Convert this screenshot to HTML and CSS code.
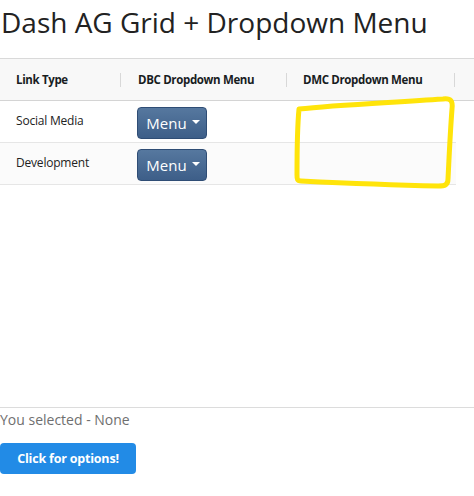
FILE: index.html
```html
<!DOCTYPE html>
<html>
<head>
<meta charset="utf-8">
<link rel="stylesheet" href="styles.css">
</head>
<body>
<h1 class="title">Dash AG Grid + Dropdown Menu</h1>
<div class="grid">
  <div class="grid-header">
    <div class="hcell c1">Link Type<span class="sep"></span></div>
    <div class="hcell c2">DBC Dropdown Menu<span class="sep"></span></div>
    <div class="hcell c3">DMC Dropdown Menu<span class="sep"></span></div>
  </div>
  <div class="grid-body">
    <div class="row">
      <div class="cell c1">Social Media</div>
      <div class="cell c2"><button class="menu-btn">Menu<span class="caret"></span></button></div>
      <div class="cell c3"></div>
    </div>
    <div class="row odd">
      <div class="cell c1">Development</div>
      <div class="cell c2"><button class="menu-btn">Menu<span class="caret"></span></button></div>
      <div class="cell c3"></div>
    </div>
  </div>
  <svg class="annot" width="170" height="100" viewBox="0 0 170 100">
    <path d="M6 14 C 40 10, 90 8, 150 4 C 158 3, 160 6, 159 14 C 157 40, 156 65, 155 84 C 155 90, 152 91, 145 91 C 100 90, 50 88, 8 86 C 4 86, 4 84, 4 80 C 4 60, 4 35, 6 14 Z" fill="none" stroke="#ffe40a" stroke-width="5" stroke-linejoin="round" stroke-linecap="round"/>
  </svg>
</div>
<div class="selected">You selected - None</div>
<button class="options-btn">Click for options!</button>
</body>
</html>
```

FILE: styles.css
```css
html, body {
  margin: 0;
  padding: 0;
  background: #ffffff;
}
body {
  font-family: "Open Sans", "Noto Sans", sans-serif;
  width: 474px;
  height: 496px;
  overflow: hidden;
}
.title {
  margin: 0;
  padding: 0 0 0 1px;
  font-size: 28px;
  font-weight: 400;
  line-height: 44px;
  color: #222;
  height: 58px;
}
.grid {
  position: relative;
  border-top: 1px solid #d9d9d9;
  border-bottom: 1px solid #dcdcdc;
  height: 348px;
}
.grid-header {
  display: flex;
  height: 41px;
  background: #f8f8f8;
  border-bottom: 1px solid #d4d4d4;
}
.hcell {
  position: relative;
  display: flex;
  align-items: center;
  padding-left: 17px;
  font-size: 11.5px;
  letter-spacing: -0.35px;
  font-weight: 700;
  color: #181d1f;
  box-sizing: border-box;
}
.c1 { width: 121px; }
.c2 { width: 166px; }
.c3 { width: 168px; }
.hcell .sep {
  position: absolute;
  right: 0;
  top: 14px;
  width: 1px;
  height: 14px;
  background: #d8d8d8;
}
.hcell.c1 { padding-left: 16px; }
.hcell.c3 { padding-left: 16px; }
.grid-body {
  width: 456px;
}
.row {
  display: flex;
  height: 41px;
  border-bottom: 1px solid #e6e6e6;
  background: #fff;
}
.row.odd {
  background: #fbfbfb;
}
.cell {
  display: flex;
  align-items: center;
  box-sizing: border-box;
  padding-left: 16px;
  font-size: 12px;
  letter-spacing: -0.2px;
  color: #222;
}
.cell.c1 {
  padding-bottom: 2px;
}
.menu-btn {
  box-sizing: border-box;
  width: 70px;
  height: 32px;
  margin-top: 2px;
  border: 1px solid #2f4d75;
  border-radius: 4px;
  background: linear-gradient(#56789f, #3d5e88);
  color: #fff;
  font-family: "Open Sans", sans-serif;
  font-size: 15px;
  padding: 0 0 0 2px;
  display: flex;
  align-items: center;
  justify-content: center;
  gap: 5px;
}
.caret {
  width: 0;
  height: 0;
  border-left: 4px solid transparent;
  border-right: 4px solid transparent;
  border-top: 4px solid #fff;
  margin-top: -2px;
}
.annot {
  position: absolute;
  left: 293px;
  top: 36px;
  overflow: visible;
}
.selected {
  margin-top: 2px;
  font-size: 14px;
  line-height: 20px;
  color: #6f6f6f;
}
.options-btn {
  margin-top: 13px;
  width: 136px;
  height: 31px;
  border: none;
  border-radius: 4px;
  background: #228be6;
  color: #fff;
  font-family: "Open Sans", sans-serif;
  font-weight: 700;
  font-size: 12.5px;
  letter-spacing: -0.2px;
  padding: 0;
}
```
